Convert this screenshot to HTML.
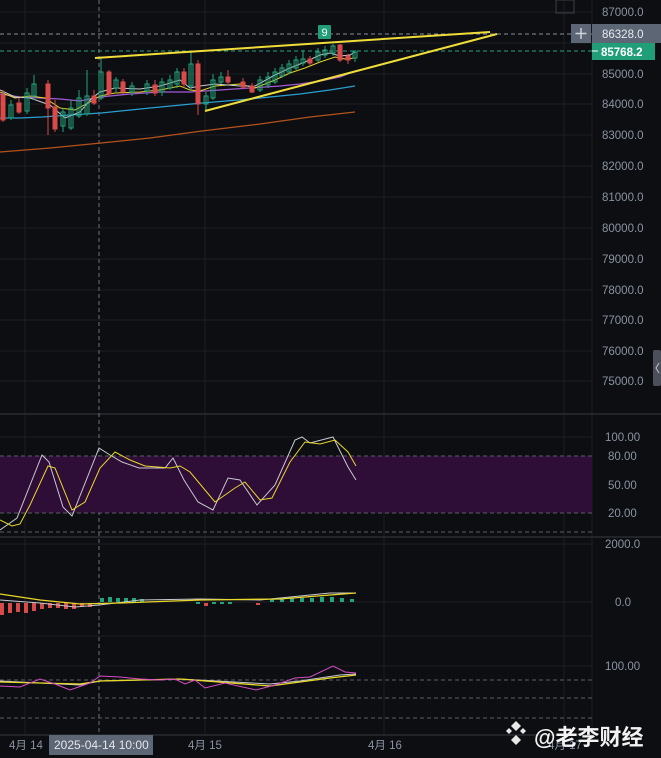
<!DOCTYPE html>
<html><head><meta charset="utf-8"><style>
html,body{margin:0;padding:0;background:#0d0e11;}
svg{display:block;font-family:"Liberation Sans","Noto Sans CJK SC",sans-serif;}
.ax{fill:#8a93a3;font-size:11.5px;}
</style></head><body>
<svg width="661" height="758" viewBox="0 0 661 758">
<rect width="661" height="758" fill="#0d0e11"/>
<!-- grid -->
<g stroke="#1d1f24" stroke-width="1">
<line x1="0" y1="12" x2="592" y2="12"/><line x1="0" y1="43" x2="592" y2="43"/><line x1="0" y1="74" x2="592" y2="74"/><line x1="0" y1="104" x2="592" y2="104"/><line x1="0" y1="135" x2="592" y2="135"/><line x1="0" y1="166" x2="592" y2="166"/><line x1="0" y1="197" x2="592" y2="197"/><line x1="0" y1="228" x2="592" y2="228"/><line x1="0" y1="259" x2="592" y2="259"/><line x1="0" y1="290" x2="592" y2="290"/><line x1="0" y1="320" x2="592" y2="320"/><line x1="0" y1="351" x2="592" y2="351"/><line x1="0" y1="381" x2="592" y2="381"/>
<line x1="0" y1="437" x2="592" y2="437"/><line x1="0" y1="484" x2="592" y2="484"/><line x1="0" y1="544" x2="592" y2="544"/><line x1="0" y1="602" x2="592" y2="602"/><line x1="0" y1="636" x2="592" y2="636"/><line x1="0" y1="666" x2="592" y2="666"/>
<line x1="25" y1="0" x2="25" y2="735"/><line x1="205" y1="0" x2="205" y2="735"/><line x1="384" y1="0" x2="384" y2="735"/><line x1="564" y1="0" x2="564" y2="735"/>
<line x1="592" y1="0" x2="592" y2="735"/>
</g>
<g stroke="#2a2c32" stroke-width="1.5"><line x1="0" y1="414" x2="661" y2="414"/><line x1="0" y1="537" x2="661" y2="537"/><line x1="0" y1="735" x2="592" y2="735"/></g>
<line x1="99" y1="0" x2="99" y2="735" stroke="#6b7080" stroke-dasharray="4,3"/>
<!-- price dashed lines -->
<line x1="0" y1="34" x2="592" y2="34" stroke="#8a8f99" stroke-dasharray="4,3"/>
<line x1="0" y1="51" x2="592" y2="51" stroke="#2aa381" stroke-dasharray="4,3"/>
<rect x="556" y="0" width="18" height="13" fill="none" stroke="#3a3d48"/>
<!-- MAs -->
<polyline fill="none" stroke="#b3531c" stroke-width="1.3" points="0,152 50,148 101,143 150,138 202,131 260,124 310,117 355,112"/>
<polyline fill="none" stroke="#2a9fd0" stroke-width="1.3" points="0,118 20,118 42,117 70,115 101,113 150,108 202,103 250,99 300,94 330,90 355,86"/>
<polyline fill="none" stroke="#a45ad6" stroke-width="1.3" points="0,94 20,97 40,98 60,99 80,101 100,97 130,94 160,92 190,92 220,90 250,88 280,86 300,84 320,81 340,77 350,73"/>
<polyline fill="none" stroke="#e2d42a" stroke-width="1" points="0,92 15,98 30,96 45,98 60,108 75,110 90,102 100,96 115,93 140,92 160,90 180,86 190,90 200,91 215,86 240,84 255,88 275,80 290,73 305,68 320,62 335,57 345,59 355,58"/>
<polyline fill="none" stroke="#c8c8d0" stroke-width="1" points="0,90 15,97 30,98 50,105 65,118 80,112 92,98 100,92 115,88 140,89 160,86 180,80 190,88 200,86 215,84 240,86 255,86 275,75 290,68 305,62 320,55 330,53 340,56 350,55 355,52"/>
<!-- candles -->
<g stroke-width="1">
<g fill="#d94a4a" stroke="#d94a4a">
<rect x="1" y="95" width="4" height="25"/><line x1="3" y1="90" x2="3" y2="122"/>
<rect x="17" y="103" width="4" height="9"/><line x1="19" y1="98" x2="19" y2="114"/>
<rect x="46" y="84" width="4" height="24"/><line x1="48" y1="80" x2="48" y2="135"/>
<rect x="53" y="107" width="4" height="22"/><line x1="55" y1="100" x2="55" y2="132"/>
<rect x="92" y="96" width="4" height="7"/><line x1="94" y1="90" x2="94" y2="105"/>
<rect x="107" y="72" width="4" height="22"/><line x1="109" y1="70" x2="109" y2="96"/>
<rect x="121" y="82" width="4" height="10"/><line x1="123" y1="79" x2="123" y2="94"/>
<rect x="153" y="85" width="4" height="8"/><line x1="155" y1="80" x2="155" y2="96"/>
<rect x="182" y="72" width="4" height="12"/><line x1="184" y1="68" x2="184" y2="88"/>
<rect x="196" y="64" width="4" height="40"/><line x1="198" y1="60" x2="198" y2="115"/>
<rect x="226" y="77" width="4" height="5"/><line x1="228" y1="70" x2="228" y2="84"/>
<rect x="241" y="82" width="4" height="5"/><line x1="243" y1="78" x2="243" y2="89"/>
<rect x="250" y="86" width="4" height="6"/><line x1="252" y1="83" x2="252" y2="93"/>
<rect x="308" y="59" width="4" height="4"/><line x1="310" y1="56" x2="310" y2="65"/>
<rect x="338" y="45" width="4" height="15"/><line x1="340" y1="44" x2="340" y2="62"/>
<rect x="346" y="56" width="4" height="4"/><line x1="348" y1="54" x2="348" y2="64"/>
</g>
<g fill="none" stroke="#22a37a">
<rect x="9" y="105" width="4" height="13"/><line x1="11" y1="100" x2="11" y2="120"/>
<rect x="25" y="93" width="4" height="18"/><line x1="27" y1="88" x2="27" y2="114"/>
<rect x="32" y="84" width="4" height="12"/><line x1="34" y1="75" x2="34" y2="100"/>
<rect x="61" y="112" width="4" height="14"/><line x1="63" y1="108" x2="63" y2="132"/>
<rect x="69" y="108" width="4" height="20"/><line x1="71" y1="100" x2="71" y2="130"/>
<rect x="77" y="98" width="4" height="18"/><line x1="79" y1="90" x2="79" y2="118"/>
<rect x="85" y="96" width="4" height="18"/><line x1="87" y1="70" x2="87" y2="116"/>
<rect x="99" y="72" width="4" height="26"/><line x1="101" y1="58" x2="101" y2="100"/>
<rect x="114" y="80" width="4" height="8"/><line x1="116" y1="77" x2="116" y2="92"/>
<rect x="130" y="86" width="4" height="6"/><line x1="132" y1="82" x2="132" y2="96"/>
<rect x="145" y="84" width="4" height="7"/><line x1="147" y1="80" x2="147" y2="95"/>
<rect x="160" y="82" width="4" height="10"/><line x1="162" y1="78" x2="162" y2="96"/>
<rect x="168" y="80" width="4" height="8"/><line x1="170" y1="75" x2="170" y2="90"/>
<rect x="175" y="72" width="4" height="12"/><line x1="177" y1="68" x2="177" y2="88"/>
<rect x="189" y="64" width="4" height="22"/><line x1="191" y1="52" x2="191" y2="90"/>
<rect x="204" y="96" width="4" height="8"/><line x1="206" y1="92" x2="206" y2="110"/>
<rect x="211" y="80" width="4" height="18"/><line x1="213" y1="74" x2="213" y2="100"/>
<rect x="219" y="77" width="4" height="5"/><line x1="221" y1="72" x2="221" y2="84"/>
<rect x="258" y="80" width="4" height="10"/><line x1="260" y1="76" x2="260" y2="92"/>
<rect x="266" y="77" width="4" height="8"/><line x1="268" y1="72" x2="268" y2="88"/>
<rect x="273" y="72" width="4" height="10"/><line x1="275" y1="68" x2="275" y2="84"/>
<rect x="280" y="68" width="4" height="8"/><line x1="282" y1="64" x2="282" y2="78"/>
<rect x="287" y="64" width="4" height="8"/><line x1="289" y1="60" x2="289" y2="74"/>
<rect x="294" y="60" width="4" height="8"/><line x1="296" y1="56" x2="296" y2="70"/>
<rect x="301" y="59" width="4" height="4"/><line x1="303" y1="50" x2="303" y2="66"/>
<rect x="316" y="52" width="4" height="8"/><line x1="318" y1="48" x2="318" y2="62"/>
<rect x="323" y="50" width="4" height="5"/><line x1="325" y1="46" x2="325" y2="58"/>
<rect x="331" y="46" width="4" height="7"/><line x1="333" y1="44" x2="333" y2="56"/>
<rect x="353" y="52" width="4" height="6"/><line x1="355" y1="50" x2="355" y2="62"/>
</g>
</g>
<!-- trendlines -->
<line x1="95" y1="58" x2="490" y2="32" stroke="#f0dd3a" stroke-width="2"/>
<line x1="205" y1="111" x2="497" y2="34" stroke="#f0dd3a" stroke-width="2"/>
<rect x="318" y="25" width="13" height="14" fill="#1f9e77" rx="1"/>
<text x="324.5" y="36" fill="#fff" font-size="11" text-anchor="middle">9</text>
<!-- price axis -->
<g class="ax" text-anchor="start">
<text x="602" y="16">87000.0</text><text x="602" y="78">85000.0</text><text x="602" y="108">84000.0</text><text x="602" y="139">83000.0</text><text x="602" y="170">82000.0</text><text x="602" y="201">81000.0</text><text x="602" y="232">80000.0</text><text x="602" y="263">79000.0</text><text x="602" y="294">78000.0</text><text x="602" y="324">77000.0</text><text x="602" y="355">76000.0</text><text x="602" y="385">75000.0</text>
</g>
<rect x="571" y="24" width="20" height="19" fill="#5d6675"/>
<path d="M581 28v11M575.5 33.5h11" stroke="#d0d4da" stroke-width="1.5"/>
<rect x="592" y="24" width="69" height="19" fill="#5d6675"/>
<text x="602" y="38" fill="#e8eaee" font-size="11.5">86328.0</text>
<rect x="592" y="43" width="63" height="17" fill="#1f9e77"/>
<line x1="592" y1="51" x2="598" y2="51" stroke="#fff"/>
<text x="601" y="56" fill="#fff" font-size="11.5" font-weight="bold">85768.2</text>
<rect x="653" y="350" width="8" height="36" fill="#4a4f5a" rx="2"/>
<path d="M659 363l-3 5 3 5" stroke="#c0c4cc" fill="none"/>
<!-- RSI panel -->
<rect x="0" y="456" width="592" height="57" fill="#2e0d36"/>
<g stroke="#5a5d66" stroke-dasharray="4,3"><line x1="0" y1="456" x2="592" y2="456"/><line x1="0" y1="513" x2="592" y2="513"/><line x1="0" y1="532" x2="592" y2="532"/></g>
<polyline fill="none" stroke="#c8c8d0" stroke-width="1" points="0,530 17,518 42,455 49,462 63,507 72,516 99,448 110,455 122,462 139,468 165,468 173,458 184,480 198,502 213,510 228,478 240,480 257,505 275,485 295,440 302,437 310,443 333,437 348,467 356,480"/>
<polyline fill="none" stroke="#e8d82a" stroke-width="1" points="0,520 12,526 20,524 30,505 48,466 55,468 72,510 85,502 100,468 115,452 130,460 145,466 170,468 180,466 190,472 205,490 215,502 235,488 245,482 260,500 272,498 290,462 305,442 320,444 335,440 348,452 356,466"/>
<g class="ax" text-anchor="start"><text x="605" y="441">100.00</text><text x="608" y="460">80.00</text><text x="608" y="489">50.00</text><text x="608" y="517">20.00</text><text x="605" y="548">2000.0</text><text x="615" y="606">0.0</text><text x="605" y="670">100.00</text></g>
<!-- MACD -->
<g fill="#d94a4a"><rect x="0" y="603" width="4" height="12"/><rect x="8" y="603" width="4" height="10"/><rect x="16" y="603" width="4" height="9"/><rect x="24" y="603" width="4" height="10"/><rect x="32" y="603" width="4" height="8"/><rect x="40" y="603" width="4" height="6"/><rect x="48" y="603" width="4" height="5"/><rect x="56" y="603" width="4" height="5"/><rect x="64" y="603" width="4" height="6"/><rect x="72" y="603" width="4" height="6"/><rect x="80" y="603" width="4" height="4"/><rect x="88" y="603" width="4" height="4"/><rect x="204" y="603" width="4" height="3"/><rect x="256" y="603" width="4" height="2"/></g>
<g fill="#22a37a"><rect x="100" y="598" width="4" height="4"/><rect x="108" y="597" width="4" height="5"/><rect x="116" y="598" width="4" height="4"/><rect x="124" y="598" width="4" height="4"/><rect x="132" y="598" width="4" height="4"/><rect x="140" y="599" width="4" height="3"/><rect x="196" y="602" width="4" height="2"/><rect x="212" y="602" width="4" height="2"/><rect x="220" y="602" width="4" height="2"/><rect x="228" y="602" width="4" height="2"/><rect x="270" y="599" width="4" height="3"/><rect x="280" y="599" width="4" height="3"/><rect x="290" y="598" width="4" height="4"/><rect x="300" y="598" width="4" height="4"/><rect x="310" y="598" width="4" height="4"/><rect x="320" y="597" width="4" height="5"/><rect x="330" y="597" width="4" height="5"/><rect x="340" y="598" width="4" height="4"/><rect x="350" y="599" width="4" height="3"/></g>
<polyline fill="none" stroke="#c8c8d0" stroke-width="1" points="0,600 40,603 75,607 99,605 140,600 200,599 260,600 300,596 330,593 356,593"/>
<polyline fill="none" stroke="#e8d82a" stroke-width="1.3" points="0,594 40,600 80,604 120,603 200,600 280,599 330,595 356,593"/>
<!-- bottom panel -->
<g stroke="#5a5d66" stroke-dasharray="4,3"><line x1="0" y1="680" x2="592" y2="680"/><line x1="0" y1="698" x2="592" y2="698"/><line x1="0" y1="718" x2="592" y2="718"/></g>
<polyline fill="none" stroke="#c8c8d0" stroke-width="1" points="0,681 40,683 80,685 100,681 180,679 270,684 300,681 340,675 356,674"/>
<polyline fill="none" stroke="#e8d82a" stroke-width="1.3" points="0,682 80,684 100,681 180,679 270,686 330,678 356,675"/>
<polyline fill="none" stroke="#d64cc8" stroke-width="1" points="0,686 20,687 40,679 55,684 70,690 90,683 100,676 120,677 140,679 160,680 175,679 185,684 195,680 205,688 225,683 256,690 275,685 295,678 310,677 333,666 345,672 356,673"/>
<!-- bottom axis -->
<text x="9" y="749" class="ax">4月 14</text>
<rect x="49" y="735" width="104" height="20" fill="#5d6675"/>
<text x="54" y="749" fill="#e4e6ea" font-size="12">2025-04-14 10:00</text>
<text x="188" y="749" class="ax">4月 15</text>
<text x="368" y="749" class="ax">4月 16</text>
<text x="548" y="749" class="ax">4月 17</text>
<!-- watermark -->
<g fill="#e8e8e8"><path d="M516 721l5 5-5 5-5-5z"/><path d="M509 728l3 3-3 3-3-3z"/><path d="M523 728l3 3-3 3-3-3z"/><path d="M516 735l5 5-5 5-5-5z"/></g>
<text x="534" y="745" fill="#f2f2f2" font-size="22" font-weight="bold" font-family="'Liberation Sans','Noto Sans CJK SC',sans-serif">@老李财经</text>
</svg>
</body></html>
